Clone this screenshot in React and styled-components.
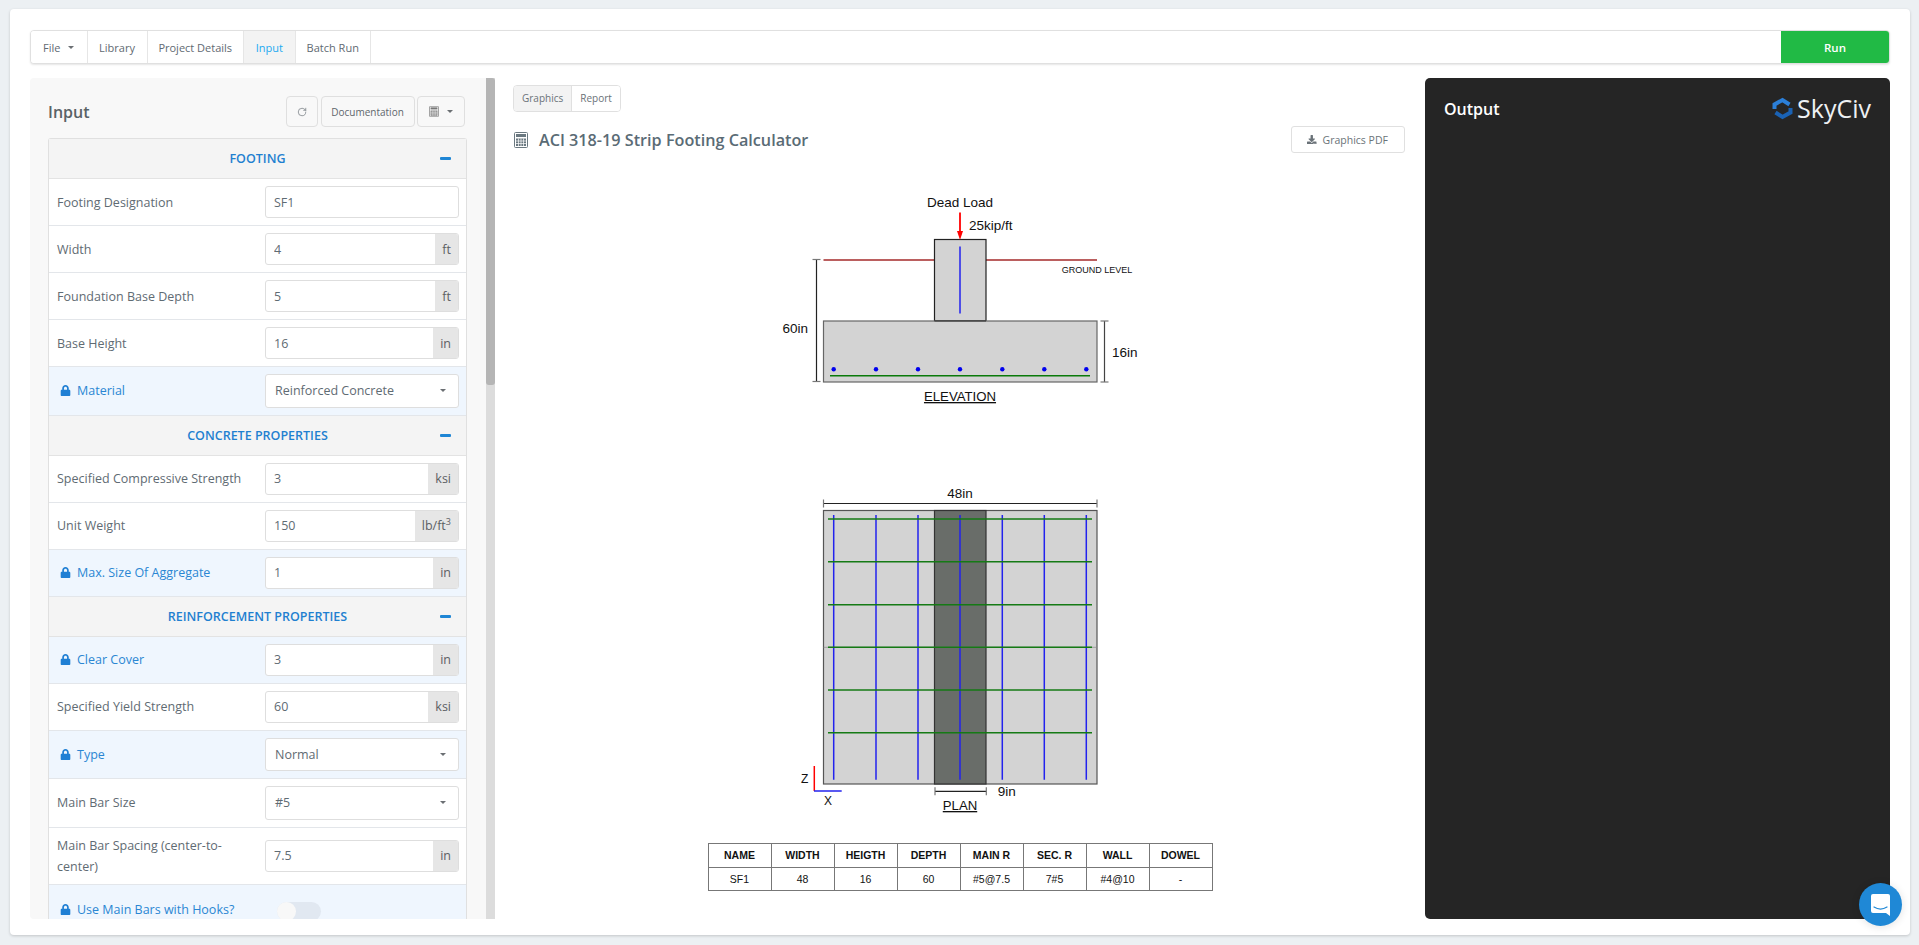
import React from 'react'
import styled, {createGlobalStyle} from 'styled-components'
import {FaLock, FaDownload} from 'react-icons/fa'
import {RotateCw} from 'lucide-react'

const GlobalStyle = createGlobalStyle`
    html, body {
        margin: 0;
        height: 100%;
        overflow: hidden;
        background: #ecf0f3;
        font-family: "Open Sans", "Liberation Sans", sans-serif;
        color: #5f6b73;
    }
    * { box-sizing: border-box; }
`

const Card = styled.div`
    margin: 9px 9px 0 10px;
    height: 926px;
    padding: 21px 20px 16px 20px;
    background: #fff;
    border-radius: 4px;
    box-shadow: 0 1px 3px rgba(0, 0, 0, .18);
    display: flex;
    flex-direction: column;
`

const Nav = styled.div`
    height: 34px;
    flex: none;
    display: flex;
    border: 1px solid #e0e0e0;
    border-radius: 4px;
    box-shadow: 0 1px 2px rgba(0, 0, 0, .1);
    background: #fff;
    overflow: hidden;
`

const NavItem = styled.div`
    width: ${p => p.$w}px;
    display: flex;
    align-items: center;
    justify-content: center;
    gap: 8px;
    font-size: 11px;
    border-right: 1px solid #e6e6e6;
    color: ${p => p.$active ? '#1eaaf1' : '#5f6a72'};
    background: ${p => p.$active ? '#f3f3f3' : '#fff'};
`

const Caret = styled.span`
    width: 0;
    height: 0;
    border-left: 3.5px solid transparent;
    border-right: 3.5px solid transparent;
    border-top: 3.5px solid #6b6f73;
`

const RunButton = styled.div`
    margin-left: auto;
    width: 108px;
    background: #21ba45;
    color: #fff;
    font-size: 11.5px;
    font-weight: 600;
    display: flex;
    align-items: center;
    justify-content: center;
`

const Columns = styled.div`
    margin-top: 14px;
    height: 841px;
    display: grid;
    grid-template-columns: 465px 930px 465px;
`

const InputPanel = styled.div`
    display: flex;
    background: #f8f8f8;
    border-radius: 4px 0 0 4px;
    overflow: hidden;
`

const InputScroll = styled.div`
    flex: 1;
    min-width: 0;
    padding: 18px 19px 0 18px;
`

const Track = styled.div`
    width: 9px;
    flex: none;
    background: #dcdcdc;
`

const Thumb = styled.div`
    height: 307px;
    background: #b5b5b5;
    border-radius: 0 3px 3px 3px;
`

const PanelHead = styled.div`
    display: flex;
    align-items: center;
    gap: 2.5px;
    height: 31px;
    margin-bottom: 11px;
    padding-right: 2.5px;
`

const PanelTitle = styled.div`
    margin-right: auto;
    font-size: 16px;
    font-weight: 600;
    color: #5a6266;
`

const ToolButton = styled.div`
    height: 31px;
    width: ${p => p.$w}px;
    display: flex;
    align-items: center;
    justify-content: center;
    gap: 8px;
    font-size: 10px;
    color: #5f676d;
    border: 1px solid #dfdfdf;
    border-radius: 4px;
    background: #f8f8f8;
`

const FormTable = styled.div`
    border: 1px solid #e0e0e0;
    border-bottom: 0;
    border-radius: 3px 3px 0 0;
    background: #fff;
`

const SectionHead = styled.div`
    position: relative;
    height: 40px;
    display: flex;
    align-items: center;
    justify-content: center;
    background: #f4f4f4;
    border-bottom: 1px solid #e3e3e3;
    font-size: 12.5px;
    font-weight: 600;
    color: #1f80d0;
`

const Minus = styled.span`
    position: absolute;
    right: 15px;
    top: 18px;
    width: 11px;
    height: 3px;
    border-radius: 1px;
    background: #1f86d5;
`

const Row = styled.div`
    display: flex;
    align-items: center;
    padding: 7px 7px 7px 8px;
    border-bottom: 1px solid #e3e6ea;
    background: ${p => p.$locked ? '#eff6fe' : '#fff'};
`

const Label = styled.div`
    width: 208px;
    flex: none;
    padding-right: 14px;
    font-size: 12.5px;
    line-height: 21px;
    display: flex;
    align-items: center;
    gap: 6px;
    color: ${p => p.$locked ? '#2a86d3' : '#5f6b73'};
    svg {
        flex: none;
        margin-left: 3px;
        font-size: 11px;
        color: #1f7fd4;
    }
`

const Field = styled.div`
    flex: 1;
    min-width: 0;
    display: flex;
    height: 32px;
    border: 1px solid #dedede;
    border-radius: 3px;
    background: #fff;
    overflow: hidden;
`

const FieldInput = styled.input`
    flex: 1;
    min-width: 0;
    border: 0;
    outline: 0;
    padding: 0 8px;
    font: 12.5px "Open Sans", sans-serif;
    color: #5f6b73;
    background: transparent;
`

const Unit = styled.div`
    flex: none;
    padding: 0 7px;
    display: flex;
    align-items: center;
    background: #e6e6e6;
    font-size: 12.5px;
    color: #5c6063;
    sup {
        font-size: 9px;
        line-height: 0;
    }
`

const Select = styled.div`
    flex: 1;
    min-width: 0;
    height: 33.5px;
    padding: 0 12px 0 9px;
    display: flex;
    align-items: center;
    justify-content: space-between;
    border: 1px solid #dedede;
    border-radius: 3px;
    background: #fff;
    font-size: 12.5px;
    color: #5f6b73;
`

const ToggleRow = styled(Row)`
    padding: 14px 8px 0;
    height: 60px;
    align-items: flex-start;
`

const Toggle = styled.div`
    margin: 3px 0 0 12px;
    width: 44px;
    height: 19px;
    border-radius: 10px;
    background: #e1e8f1;
`

const Knob = styled.div`
    width: 19px;
    height: 19px;
    border-radius: 50%;
    background: #f8f8f8;
`

const GraphicsColumn = styled.div`
    display: flex;
    flex-direction: column;
    padding-top: 7px;
`

const TabGroup = styled.div`
    margin-left: 18px;
    align-self: flex-start;
    display: flex;
    height: 26.5px;
    border: 1px solid #e0e0e0;
    border-radius: 4px;
    overflow: hidden;
`

const Tab = styled.div`
    display: flex;
    align-items: center;
    padding: 0 8px;
    font-size: 10px;
    color: #6a7278;
    background: ${p => p.$active ? '#f3f3f3' : '#fff'};
    border-right: ${p => p.$active ? '1px solid #e0e0e0' : '0'};
`

const TitleRow = styled.div`
    margin: 14.5px 20.5px 0 19px;
    height: 27px;
    display: flex;
    align-items: center;
    justify-content: space-between;
`

const Title = styled.h1`
    margin: 0;
    display: flex;
    align-items: center;
    gap: 11px;
    font-size: 16.2px;
    font-weight: 600;
    color: #5a6b75;
`

const PdfButton = styled.div`
    width: 114px;
    height: 27px;
    display: flex;
    align-items: center;
    justify-content: center;
    gap: 6px;
    border: 1px solid #e0e0e0;
    border-radius: 3px;
    font-size: 10.5px;
    color: #6a7278;
    svg {
        font-size: 9.5px;
    }
`

const Drawing = styled.svg`
    display: block;
    width: 930px;
    height: 677px;
    flex: none;
    font-family: "Liberation Sans", Arial, sans-serif;
`

const Schedule = styled.table`
    margin: 12.5px auto 0;
    width: 505px;
    table-layout: fixed;
    border-collapse: collapse;
    border: 1px solid #555;
    font-family: "Liberation Sans", Arial, sans-serif;
    color: #111;
    th, td {
        border: 1px solid #777;
        padding: 0;
        text-align: center;
    }
    th {
        height: 24px;
        font-size: 10.5px;
        font-weight: 700;
    }
    td {
        height: 23px;
        font-size: 10.5px;
    }
`

const OutputPanel = styled.div`
    background: #252525;
    border-radius: 5px;
    padding: 17px 19px;
    height: 841px;
    display: flex;
    align-items: flex-start;
    justify-content: space-between;
`

const OutputTitle = styled.div`
    margin-top: 3px;
    font-size: 16px;
    font-weight: 600;
    color: #fff;
`

const Logo = styled.div`
    display: flex;
    align-items: center;
    gap: 4px;
    margin-top: -2px;
    font-size: 25px;
    font-weight: 500;
    line-height: 30px;
    color: #eef1f3;
`

const Chat = styled.div`
    position: fixed;
    right: 17.5px;
    bottom: 19px;
    width: 43px;
    height: 43px;
    border-radius: 50%;
    background: #1f88d6;
    box-shadow: 0 1px 8px rgba(0, 0, 0, .12);
    display: flex;
    align-items: center;
    justify-content: center;
`

const CalcIcon = ({w, h, color}) => (
    <svg width={w} height={h} viewBox="0 0 14 16">
        <rect x=".5" y=".5" width="13" height="15" rx="1" fill="#fff" stroke={color} />
        <rect x="2" y="2" width="10" height="3" fill={color} />
        <path d="M2 6.5h10v7.5H2z" fill={color} />
        <path d="M4.5 6.5v7.5M7 6.5v7.5M9.5 6.5v7.5M2 9h10M2 11.5h10" stroke="#fff" strokeWidth=".7" />
    </svg>
)

const sections = [
    {
        title: 'FOOTING',
        rows: [
            {label: 'Footing Designation', value: 'SF1'},
            {label: 'Width', value: '4', unit: 'ft'},
            {label: 'Foundation Base Depth', value: '5', unit: 'ft'},
            {label: 'Base Height', value: '16', unit: 'in'},
            {label: 'Material', select: 'Reinforced Concrete', locked: true},
        ],
    },
    {
        title: 'CONCRETE PROPERTIES',
        rows: [
            {label: 'Specified Compressive Strength', value: '3', unit: 'ksi'},
            {label: 'Unit Weight', value: '150', unit: 'lb/ft3'},
            {label: 'Max. Size Of Aggregate', value: '1', unit: 'in', locked: true},
        ],
    },
    {
        title: 'REINFORCEMENT PROPERTIES',
        rows: [
            {label: 'Clear Cover', value: '3', unit: 'in', locked: true},
            {label: 'Specified Yield Strength', value: '60', unit: 'ksi'},
            {label: 'Type', select: 'Normal', locked: true},
            {label: 'Main Bar Size', select: '#5'},
            {label: 'Main Bar Spacing (center-to-center)', value: '7.5', unit: 'in'},
        ],
    },
]

const FormRow = ({label, value, unit, select, locked}) => (
    <Row $locked={locked}>
        <Label $locked={locked}>{locked && <FaLock />}{label}</Label>
        {select ? (
            <Select>{select}<Caret /></Select>
        ) : (
            <Field>
                <FieldInput value={value} readOnly />
                {unit && (
                    <Unit>
                        {unit === 'lb/ft3' ? <span>lb/ft<sup>3</sup></span> : unit}
                    </Unit>
                )}
            </Field>
        )}
    </Row>
)

const barX = [833.7, 876, 918, 960, 1002.3, 1044.3, 1086.3]
const barY = [519, 561.7, 604.7, 647.3, 690, 732.7]

const Dim = ({x1, y1, x2, y2, color = '#222'}) => {
    const horizontal = y1 === y2
    return (
        <g stroke={color} strokeWidth="1.2">
            <line x1={x1} y1={y1} x2={x2} y2={y2} />
            {horizontal ? (
                <>
                    <line x1={x1} y1={y1 - 4} x2={x1} y2={y1 + 4} stroke="#777" />
                    <line x1={x2} y1={y1 - 4} x2={x2} y2={y1 + 4} stroke="#777" />
                </>
            ) : (
                <>
                    <line x1={x1 - 4} y1={y1} x2={x1 + 4} y2={y1} stroke="#777" />
                    <line x1={x1 - 4} y1={y2} x2={x1 + 4} y2={y2} stroke="#777" />
                </>
            )}
        </g>
    )
}

const FootingDrawing = () => (
    <Drawing viewBox="495 153 930 677">
        {/* elevation */}
        <text x="960" y="206.5" fontSize="13.5" textAnchor="middle" fill="#111">Dead Load</text>
        <text x="969" y="230" fontSize="13.5" fill="#111">25kip/ft</text>
        <line x1="823.5" y1="260" x2="1097" y2="260" stroke="#a52a2a" strokeWidth="1.6" />
        <rect x="934.5" y="239.5" width="51.5" height="81.5" fill="#d3d3d3" stroke="#222" strokeWidth="1.2" />
        <rect x="823.5" y="321" width="273.5" height="61" fill="#d3d3d3" stroke="#666" strokeWidth="1.2" />
        <line x1="934.5" y1="321" x2="986" y2="321" stroke="#333" />
        <line x1="960" y1="246.5" x2="960" y2="313.5" stroke="#2222ee" strokeWidth="1.5" />
        <line x1="960" y1="212.5" x2="960" y2="232" stroke="#f00" strokeWidth="1.8" />
        <path d="M957 231h6l-3 9z" fill="#f00" />
        <text x="1061.7" y="272.7" fontSize="9" fill="#111">GROUND LEVEL</text>
        <Dim x1={816.5} y1={259.5} x2={816.5} y2={381.5} />
        <text x="782.5" y="332.7" fontSize="13.5" fill="#111">60in</text>
        <Dim x1={1104.5} y1={321} x2={1104.5} y2={382} color="#444" />
        <text x="1112" y="356.7" fontSize="13.5" fill="#111">16in</text>
        {barX.map(x => <circle key={x} cx={x} cy="369.3" r="2.2" fill="#0000ee" />)}
        <line x1="830" y1="375.7" x2="1090" y2="375.7" stroke="#0a7a0a" strokeWidth="1.4" />
        <text x="960" y="401" fontSize="13.2" textAnchor="middle" textDecoration="underline" fill="#111">ELEVATION</text>

        {/* plan */}
        <text x="960" y="498" fontSize="13.5" textAnchor="middle" fill="#111">48in</text>
        <Dim x1={823.5} y1={503.5} x2={1097} y2={503.5} />
        <rect x="823.5" y="510.5" width="273.5" height="273.5" fill="#d3d3d3" stroke="#555" strokeWidth="1.2" />
        <rect x="934.5" y="510.5" width="51.5" height="273.5" fill="#696d69" stroke="#333" strokeWidth="1.2" />
        <line x1="823.5" y1="647.3" x2="1097" y2="647.3" stroke="#888" strokeWidth=".7" />
        {barX.map(x => (
            <line key={x} x1={x} y1="515" x2={x} y2="779.7" stroke="#2222ee" strokeWidth="1.5" />
        ))}
        {barY.map(y => (
            <line key={y} x1="828" y1={y} x2="1092" y2={y} stroke="#157a15" strokeWidth="1.5" />
        ))}
        <line x1="814.3" y1="766" x2="814.3" y2="791" stroke="#f00" strokeWidth="1.5" />
        <line x1="814" y1="791" x2="841.7" y2="791" stroke="#2222ee" strokeWidth="1.5" />
        <text x="801" y="783.3" fontSize="12" fill="#111">Z</text>
        <text x="824" y="804.7" fontSize="12" fill="#111">X</text>
        <Dim x1={935} y1={791.3} x2={986.3} y2={791.3} />
        <text x="997.7" y="795.7" fontSize="13.5" fill="#111">9in</text>
        <text x="960" y="810" fontSize="13.2" textAnchor="middle" textDecoration="underline" fill="#111">PLAN</text>
    </Drawing>
)

const scheduleHead = ['NAME', 'WIDTH', 'HEIGTH', 'DEPTH', 'MAIN R', 'SEC. R', 'WALL', 'DOWEL']
const scheduleRow = ['SF1', '48', '16', '60', '#5@7.5', '7#5', '#4@10', '-']

export default function App() {
    return (
        <>
            <GlobalStyle />
            <Card>
                <Nav>
                    <NavItem $w={56.5}>File <Caret /></NavItem>
                    <NavItem $w={60}>Library</NavItem>
                    <NavItem $w={96.5}>Project Details</NavItem>
                    <NavItem $w={51.5} $active>Input</NavItem>
                    <NavItem $w={75.5}>Batch Run</NavItem>
                    <RunButton>Run</RunButton>
                </Nav>
                <Columns>
                    <InputPanel>
                        <InputScroll>
                            <PanelHead>
                                <PanelTitle>Input</PanelTitle>
                                <ToolButton $w={32}><RotateCw size={10} strokeWidth={1.5} /></ToolButton>
                                <ToolButton $w={94}>Documentation</ToolButton>
                                <ToolButton $w={47.5}>
                                    <CalcIcon w={10} h={11} color="#777" />
                                    <Caret />
                                </ToolButton>
                            </PanelHead>
                            <FormTable>
                                {sections.map(section => (
                                    <div key={section.title}>
                                        <SectionHead>{section.title}<Minus /></SectionHead>
                                        {section.rows.map(row => <FormRow key={row.label} {...row} />)}
                                    </div>
                                ))}
                                <ToggleRow $locked>
                                    <Label $locked><FaLock />Use Main Bars with Hooks?</Label>
                                    <Toggle><Knob /></Toggle>
                                </ToggleRow>
                            </FormTable>
                        </InputScroll>
                        <Track><Thumb /></Track>
                    </InputPanel>
                    <GraphicsColumn>
                        <TabGroup>
                            <Tab $active>Graphics</Tab>
                            <Tab>Report</Tab>
                        </TabGroup>
                        <TitleRow>
                            <Title><CalcIcon w={14} h={16} color="#6a7880" />ACI 318-19 Strip Footing Calculator</Title>
                            <PdfButton><FaDownload />Graphics PDF</PdfButton>
                        </TitleRow>
                        <FootingDrawing />
                        <Schedule>
                            <thead>
                                <tr>{scheduleHead.map(h => <th key={h}>{h}</th>)}</tr>
                            </thead>
                            <tbody>
                                <tr>{scheduleRow.map((c, i) => <td key={i}>{c}</td>)}</tr>
                            </tbody>
                        </Schedule>
                    </GraphicsColumn>
                    <OutputPanel>
                        <OutputTitle>Output</OutputTitle>
                        <Logo>
                            <svg width="21" height="23" viewBox="0 0 21 23">
                                <path d="M17.5 7.5L10.5 3 2.5 7.5V12" fill="none" stroke="#2b7fd8" strokeWidth="4" />
                                <path d="M3.5 15.5L10.5 20 18.5 15.5V11" fill="none" stroke="#1a62b4" strokeWidth="4" />
                            </svg>
                            SkyCiv
                        </Logo>
                    </OutputPanel>
                </Columns>
            </Card>
            <Chat>
                <svg width="19" height="22" viewBox="0 0 19 22">
                    <path d="M2 0h15a2 2 0 0 1 2 2v20l-4-3H2a2 2 0 0 1-2-2V2a2 2 0 0 1 2-2z" fill="#fff" />
                    <path d="M3 13c4 2.5 9 2.5 13 0" fill="none" stroke="#1f88d6" strokeWidth="1.2" strokeLinecap="round" />
                </svg>
            </Chat>
        </>
    )
}
